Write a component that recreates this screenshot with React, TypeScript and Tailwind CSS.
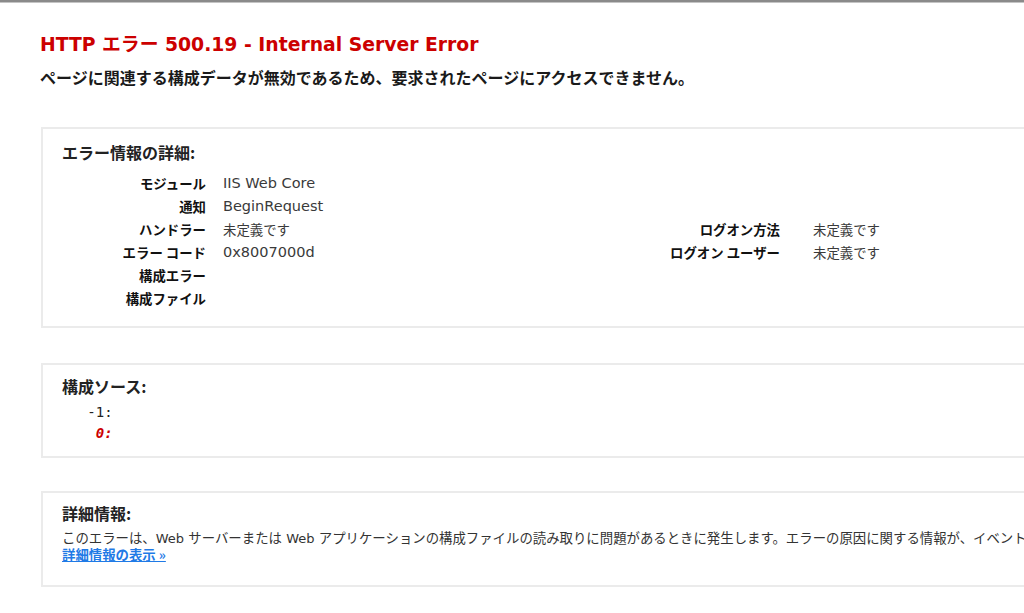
import React from "react";

const JP = "font-['Noto_Sans_CJK_JP',sans-serif]";
const MIX = "font-['DejaVu_Sans','Noto_Sans_CJK_JP',sans-serif]";

function Row({
  label,
  value,
  latin,
  label2,
  value2,
}: {
  label: string;
  value?: string;
  latin?: boolean;
  label2?: string;
  value2?: string;
}) {
  return (
    <div className="flex h-[23px] items-center">
      <div className={`w-[144px] text-right text-[13.4px] font-bold text-[#111] ${JP}`}>{label}</div>
      <div
        className={`w-[374px] pl-[17px] text-[#3a3a3a] ${latin ? `${MIX} text-[14.5px]` : `${JP} text-[13.4px]`}`}
      >
        {value}
      </div>
      <div className={`w-[200px] text-right text-[13.4px] font-bold text-[#111] ${JP}`}>{label2}</div>
      <div className={`pl-[33px] text-[13.4px] text-[#3a3a3a] ${JP}`}>{value2}</div>
    </div>
  );
}

export default function App() {
  return (
    <div className="relative h-[613px] w-[1024px] overflow-hidden bg-white">
      <div className="h-[2px] bg-[#8a8a8a]" />
      <div className="h-px bg-[#c4c4c4]" />

      <div className="pl-[40px]">
        <h2 className={`mt-[30px] h-[24px] whitespace-nowrap text-[18.8px] leading-[24px] font-bold text-[#cc0000] ${MIX}`}>
          HTTP エラー 500.19 - Internal Server Error
        </h2>
        <h3 className={`mt-[9px] h-[22px] whitespace-nowrap text-[16px] leading-[22px] font-bold text-[#1a1a1a] ${JP}`}>
          ページに関連する構成データが無効であるため、要求されたページにアクセスできません。
        </h3>
      </div>

      <div className="ml-[41px] mt-[39px] w-[1100px]">
        {/* Box 1 */}
        <div className="border-2 border-[#ebebeb] pb-[16px] pl-[19px] pt-[13px]">
          <div className={`h-[20px] text-[16px] leading-[20px] font-bold text-[#222] ${JP}`}>エラー情報の詳細:</div>
          <div className="mt-[10px] flex flex-col">
            <Row label="モジュール" value="IIS Web Core" latin />
            <Row label="通知" value="BeginRequest" latin />
            <Row label="ハンドラー" value="未定義です" label2="ログオン方法" value2="未定義です" />
            <Row label="エラー コード" value="0x8007000d" latin label2="ログオン ユーザー" value2="未定義です" />
            <Row label="構成エラー" />
            <Row label="構成ファイル" />
          </div>
        </div>

        {/* Box 2 */}
        <div className="mt-[35px] border-2 border-[#ebebeb] pb-[12px] pl-[19px] pt-[11px]">
          <div className={`h-[20px] text-[16px] leading-[20px] font-bold text-[#222] ${JP}`}>構成ソース:</div>
          <pre className="mt-[6px] font-['DejaVu_Sans_Mono',monospace] text-[14px] leading-[21px] text-[#222]">
            <div className="h-[21px]">{"   -1: "}</div>
            <div className="h-[21px]">
              {"    "}
              <span className="font-bold italic text-[#cc0000]">0:</span>
            </div>
          </pre>
        </div>

        {/* Box 3 */}
        <div className="mt-[33px] border-2 border-[#ebebeb] pb-[23px] pl-[19px] pt-[10px]">
          <div className={`h-[20px] text-[16px] leading-[20px] font-bold text-[#222] ${JP}`}>詳細情報:</div>
          <p className={`mt-[8px] h-[16px] whitespace-nowrap text-[13.4px] leading-[16px] text-[#333] ${MIX}`}>
            このエラーは、<span className="text-[13px]">Web</span> サーバーまたは <span className="text-[13px]">Web</span> アプリケーションの構成ファイルの読み取りに問題があるときに発生します。エラーの原因に関する情報が、イベント ログに記録されている可能性があります。
          </p>
          <div className="h-[15px] leading-[15px]">
            <a
              href="#"
              className={`text-[13.4px] font-bold text-[#1f7ae6] underline ${JP}`}
            >
              詳細情報の表示 »
            </a>
          </div>
        </div>
      </div>
    </div>
  );
}
